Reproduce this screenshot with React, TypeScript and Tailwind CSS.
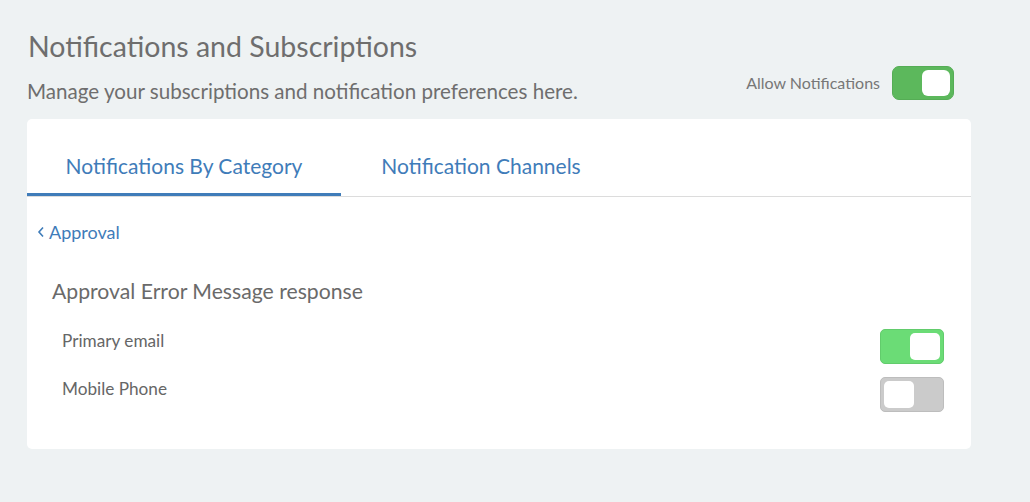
import React, { useState } from 'react'

const Toggle = ({ on, onChange, variant }: { on: boolean; onChange: () => void; variant: 'main' | 'row' }) => {
  const base =
    variant === 'main'
      ? 'w-[62px] h-[34px] p-[3px] rounded-[7px]'
      : 'w-[64px] h-[35px] p-[3px] rounded-[5px]'
  const color = on
    ? variant === 'main'
      ? 'bg-[#5cb85c] border border-[#55ad55]'
      : 'bg-[#6bdc76] border border-[#62cc6c]'
    : 'bg-[#cbcbcb] border border-[#bdbdbd]'
  return (
    <button
      onClick={onChange}
      className={`${base} ${color} flex ${on ? 'justify-end' : 'justify-start'} shrink-0`}
    >
      <span className={`h-full ${variant === 'main' ? 'w-[28px] rounded-[6px]' : 'w-[30px] rounded-[5px]'} bg-white block`} />
    </button>
  )
}

export default function App() {
  const [allow, setAllow] = useState(true)
  const [email, setEmail] = useState(true)
  const [phone, setPhone] = useState(false)

  return (
    <div className="min-h-screen bg-[#eef2f3] font-['Lato',sans-serif] text-[#6e6e6e]">
      <div className="w-[944px] ml-[27px] pt-[28px]">
        <h1 className="text-[28.5px] leading-[36px] pl-[1px]">Notifications and Subscriptions</h1>
        <div className="flex items-start justify-between">
          <p className="text-[20.6px] leading-[28px] mt-[13px]">Manage your subscriptions and notification preferences here.</p>
          <div className="flex items-center gap-[12px] mr-[17px] mt-[2px]">
            <span className="text-[16px] text-[#777]">Allow Notifications</span>
            <Toggle on={allow} onChange={() => setAllow(!allow)} variant="main" />
          </div>
        </div>

        <div className="mt-[14px] bg-white rounded-[5px] h-[330px]">
          <div className="flex border-b border-[#dcdcdc] h-[78px]">
            <button className="w-[314px] h-full flex justify-center pt-[34px] text-[21px] leading-[26px] text-[#3f7cb9] border-b-[3px] border-[#3f7cb9] -mb-[1px]">
              Notifications By Category
            </button>
            <button className="w-[280px] h-full flex justify-center pt-[34px] text-[21px] leading-[26px] text-[#3f7cb9]">
              Notification Channels
            </button>
          </div>

          <div className="pl-[10px] pr-[27px]">
            <button className="mt-[23px] flex items-center gap-[4px] text-[18px] leading-[24px] text-[#3f7cb9]">
              <svg width="8" height="12" viewBox="0 0 8 12" fill="none" stroke="#3f7cb9" strokeWidth="1.6">
                <path d="M6 1.5 L2 6 L6 10.5" />
              </svg>
              Approval
            </button>

            <h2 className="mt-[34px] ml-[15px] text-[21.2px] leading-[26px] text-[#6a6a6a]">Approval Error Message response</h2>

            <div className="mt-[25px] flex flex-col gap-[13px]">
              <div className="flex items-start justify-between pl-[25px]">
                <span className="text-[17.2px] leading-[24px] text-[#666]">Primary email</span>
                <Toggle on={email} onChange={() => setEmail(!email)} variant="row" />
              </div>
              <div className="flex items-start justify-between pl-[25px]">
                <span className="text-[17.2px] leading-[24px] text-[#666]">Mobile Phone</span>
                <Toggle on={phone} onChange={() => setPhone(!phone)} variant="row" />
              </div>
            </div>
          </div>
        </div>
      </div>
    </div>
  )
}
